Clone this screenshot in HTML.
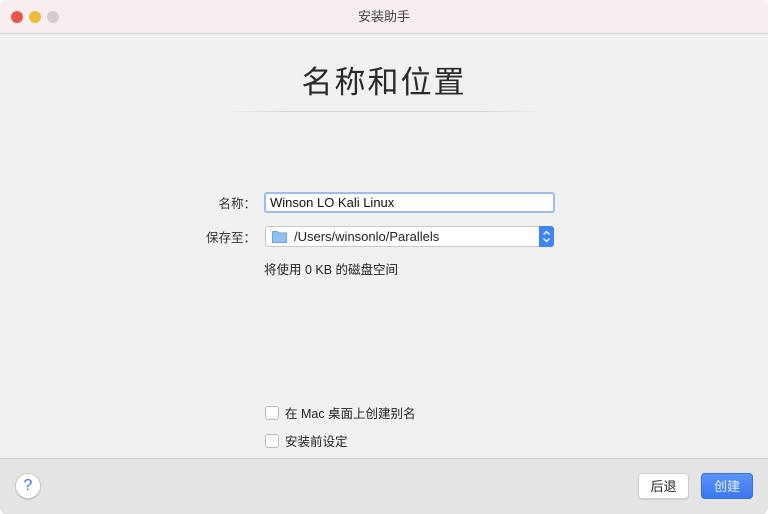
<!DOCTYPE html>
<html><head><meta charset="utf-8"><style>
*{margin:0;padding:0;box-sizing:border-box}
body{width:768px;height:514px;overflow:hidden;background:#fff;font-family:"Liberation Sans","Noto Sans CJK SC",sans-serif;color:#222}
.win{position:absolute;left:0;top:0;width:768px;height:514px;background:#f1f1f1;border-radius:6px;overflow:hidden}
.title{position:absolute;left:0;top:0;width:768px;height:34px;background:#f7efef;border-bottom:1px solid #d8d4d4;text-align:center;font-size:13px;line-height:34px;color:#444}
.dot{position:absolute;top:11px;width:12px;height:12px;border-radius:50%}
h1{position:absolute;left:0;width:768px;top:57px;text-align:center;font-weight:400;font-size:31px;color:#2a2a2a;letter-spacing:2px}
.sep{position:absolute;left:225px;top:111px;width:320px;height:1px;background:linear-gradient(90deg,rgba(200,200,200,0),#d4d4d4 20%,#d4d4d4 80%,rgba(200,200,200,0))}
.lbl{position:absolute;font-size:12.5px;color:#333;text-align:right;width:60px}
.inp{position:absolute;left:264px;top:192px;width:291px;height:21px;background:#fff;border:2px solid #9dbdf2;border-radius:3px;font-size:13px;line-height:17px;padding-left:4px;color:#111}
.sel{position:absolute;left:265px;top:226px;width:289px;height:21px;background:#fff;border:1px solid #c8c8c8;border-radius:3px;font-size:13px;line-height:19px;padding-left:28px;color:#222}
.arr{position:absolute;right:-1px;top:-1px;width:15px;height:21px;background:#3f84f5;border-radius:0 3px 3px 0}
.cb{position:absolute;left:265px;width:14px;height:14px;border:1px solid #b8b8b8;border-radius:3px;background:#fff}
.ct{position:absolute;left:285px;font-size:12.5px;color:#222}
.foot{position:absolute;left:0;top:458px;width:768px;height:56px;background:#e4e4e4;border-top:1px solid #cfcfcf}
.btn{position:absolute;top:473px;height:26px;border-radius:4px;font-size:13px;line-height:26px;text-align:center}
</style></head><body><div class="win">
<div class="title">安装助手
<div class="dot" style="left:11px;background:#e9574c"></div>
<div class="dot" style="left:29px;background:#efb93a"></div>
<div class="dot" style="left:47px;background:#d3cdcd"></div>
</div>
<h1>名称和位置</h1>
<div class="sep"></div>
<div class="lbl" style="left:196px;top:193px">名称：</div>
<div class="inp">Winson LO Kali Linux</div>
<div class="lbl" style="left:196px;top:227px">保存至：</div>
<div class="sel">
<svg style="position:absolute;left:6px;top:3px" width="15" height="13" viewBox="0 0 15 13"><path d="M0.5 1.5h5l1.5 1.5h7.5v9.5h-14z" fill="#8fc1f0" stroke="#6aa6e3"/></svg>
/Users/winsonlo/Parallels
<div class="arr"><svg width="15" height="21" viewBox="0 0 15 21"><path d="M4.5 8.5l3-3 3 3M4.5 12.5l3 3 3-3" fill="none" stroke="#fff" stroke-width="1.3"/></svg></div>
</div>
<div style="position:absolute;left:264px;top:259px;font-size:12.5px;color:#222">将使用 0 KB 的磁盘空间</div>
<div class="cb" style="top:406px"></div><div class="ct" style="top:403px">在 Mac 桌面上创建别名</div>
<div class="cb" style="top:434px"></div><div class="ct" style="top:431px">安装前设定</div>
<div class="foot"></div>
<div style="position:absolute;left:15px;top:473px;width:26px;height:26px;border-radius:50%;background:#fff;border:1px solid #c9c9c9;box-shadow:0 1px 1px rgba(0,0,0,.15);text-align:center;font-size:16px;line-height:24px;color:#3b6fe8">?</div>
<div class="btn" style="left:638px;width:51px;background:#fff;border:1px solid #cfcfcf;color:#222;box-shadow:0 1px 1px rgba(0,0,0,.1)">后退</div>
<div class="btn" style="left:701px;width:52px;background:linear-gradient(#5b93f7,#3a78f2);border:1px solid #3a6ee0;color:#e8efff">创建</div>
</div></body></html>
